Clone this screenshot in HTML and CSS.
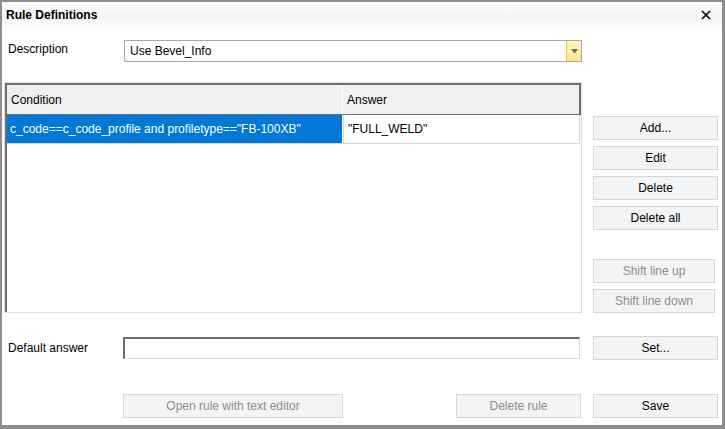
FILE: index.html
```html
<!DOCTYPE html>
<html lang="en">
<head>
    <meta charset="UTF-8">
    <title>Rule Definitions</title>
    <link rel="stylesheet" href="styles.css">
</head>
<body>
    <div class="rd_window">
        <div class="rd_titlebar">
            <span class="rd_title">Rule Definitions</span>
            <svg class="rd_close" width="10" height="10" viewBox="0 0 10 10">
                <path d="M1 1 L9 9 M9 1 L1 9" stroke="#000" stroke-width="1.6"/>
            </svg>
        </div>

        <div class="rd_body">
            <div class="rd_row rd_desc_row">
                <label class="rd_label rd_desc_label">Description</label>
                <div class="rd_combo">
                    <span class="rd_combo_text">Use Bevel_Info</span>
                    <span class="rd_combo_btn">
                        <svg width="7" height="5" viewBox="0 0 7 5"><path d="M0 0 H7 L3.5 4.5 Z" fill="#6b6b6b"/></svg>
                    </span>
                </div>
            </div>

            <div class="rd_row rd_main_row">
                <div class="rd_panel">
                    <div class="rd_grid">
                        <div class="rd_grid_head">
                            <div class="rd_col_cond">Condition</div>
                            <div class="rd_col_ans">Answer</div>
                        </div>
                        <div class="rd_grid_row">
                            <div class="rd_col_cond rd_selected">c_code==c_code_profile and profiletype=="FB-100XB"</div>
                            <div class="rd_col_ans rd_cell_ans">"FULL_WELD"</div>
                        </div>
                    </div>
                </div>

                <div class="rd_side">
                    <button class="rd_btn">Add...</button>
                    <button class="rd_btn">Edit</button>
                    <button class="rd_btn">Delete</button>
                    <button class="rd_btn">Delete all</button>
                    <button class="rd_btn rd_btn_narrow rd_btn_shift" disabled>Shift line up</button>
                    <button class="rd_btn rd_btn_narrow" disabled>Shift line down</button>
                </div>
            </div>

            <div class="rd_row rd_default_row">
                <label class="rd_label rd_default_label">Default answer</label>
                <input class="rd_input" type="text" value="">
                <button class="rd_btn rd_btn_set">Set...</button>
            </div>

            <div class="rd_row rd_bottom_row">
                <button class="rd_btn rd_btn_editor" disabled>Open rule with text editor</button>
                <button class="rd_btn rd_btn_delrule" disabled>Delete rule</button>
                <button class="rd_btn rd_btn_save">Save</button>
            </div>
        </div>
    </div>
</body>
</html>
```

FILE: styles.css
```css
* {
    margin: 0;
    padding: 0;
    box-sizing: border-box;
}

body {
    font-family: "Liberation Sans", Arial, sans-serif;
    font-size: 12px;
    color: #000;
    background: #fff;
}

.rd_window {
    width: 725px;
    height: 429px;
    border-style: solid;
    border-color: #8e8e8e;
    border-width: 2px 3px 4px 2px;
    background: #fff;
}

.rd_titlebar {
    height: 26px;
    display: flex;
    align-items: center;
    justify-content: space-between;
    padding: 0 11px 0 4px;
    background: linear-gradient(#ffffff, #f3f3f3 55%, #fbfbfb);
}

.rd_title {
    font-weight: bold;
}

.rd_body {
    padding-left: 2px;
}

.rd_row {
    display: flex;
}

.rd_label {
    padding-left: 4px;
}

/* description */
.rd_desc_row {
    margin-top: 12px;
    height: 22px;
}

.rd_desc_label {
    width: 120px;
    padding-top: 2px;
}

.rd_combo {
    width: 458px;
    height: 22px;
    border: 1px solid #a9a9a9;
    display: flex;
    align-items: center;
    justify-content: space-between;
}

.rd_combo_text {
    padding-left: 5px;
}

.rd_combo_btn {
    width: 15px;
    height: 20px;
    border-left: 1px solid #f2c230;
    background: linear-gradient(#fff6c8, #fde48a);
    display: flex;
    align-items: center;
    justify-content: center;
}

/* table */
.rd_main_row {
    margin-top: 20px;
}

.rd_panel {
    width: 578px;
    height: 231px;
    border: 1px solid #dedede;
}

.rd_grid {
    height: 100%;
    border-top: 2px solid #6f6f6f;
    border-left: 2px solid #6f6f6f;
}

.rd_grid_head {
    display: flex;
    height: 30px;
    background: #f0f0f0;
    border-bottom: 1px solid #6f6f6f;
    border-right: 2px solid #6f6f6f;
}

.rd_grid_head > div {
    display: flex;
    align-items: center;
    padding-left: 4px;
}

.rd_col_cond {
    width: 336px;
}

.rd_grid_head .rd_col_cond {
    border-right: 1px solid #ffffff;
}

.rd_col_ans {
    flex: 1;
}

.rd_grid_row {
    display: flex;
    height: 29px;
    border-bottom: 1px solid #d6d6d6;
    margin-right: 1px;
}

.rd_grid_row > div {
    display: flex;
    align-items: center;
    padding-left: 3px;
}

.rd_selected {
    background: #0078d7;
    color: #fff;
    margin-right: 1px;
    width: 335px;
}

.rd_cell_ans {
    border-left: 1px solid #d6d6d6;
    border-right: 1px solid #d6d6d6;
    padding-left: 4px !important;
}

/* buttons */
.rd_side {
    margin-left: 11px;
    padding-top: 34px;
    display: flex;
    flex-direction: column;
    gap: 6px;
}

.rd_btn {
    font-family: inherit;
    font-size: 12px;
    color: #000;
    width: 125px;
    height: 24px;
    background: #f3f4f6;
    border: 1px solid #d6d6d6;
    border-radius: 0;
}

.rd_btn:disabled {
    color: #8c8c8c;
}

.rd_btn_narrow {
    width: 122px;
}

.rd_btn_shift {
    margin-top: 23px;
}

/* default answer */
.rd_default_row {
    margin-top: 23px;
    height: 24px;
    align-items: center;
}

.rd_default_label {
    width: 119px;
}

.rd_input {
    width: 457px;
    height: 22px;
    border-style: solid;
    border-width: 2px 1px 1px 2px;
    border-color: #6f6f6f #dcdcdc #dcdcdc #6f6f6f;
    font-family: inherit;
    font-size: 12px;
    outline: none;
}

.rd_btn_set {
    margin-left: 13px;
}

/* bottom */
.rd_bottom_row {
    margin-top: 34px;
}

.rd_btn_editor {
    margin-left: 119px;
    width: 220px;
}

.rd_btn_delrule {
    margin-left: 113px;
}

.rd_btn_save {
    margin-left: 12px;
}
```
